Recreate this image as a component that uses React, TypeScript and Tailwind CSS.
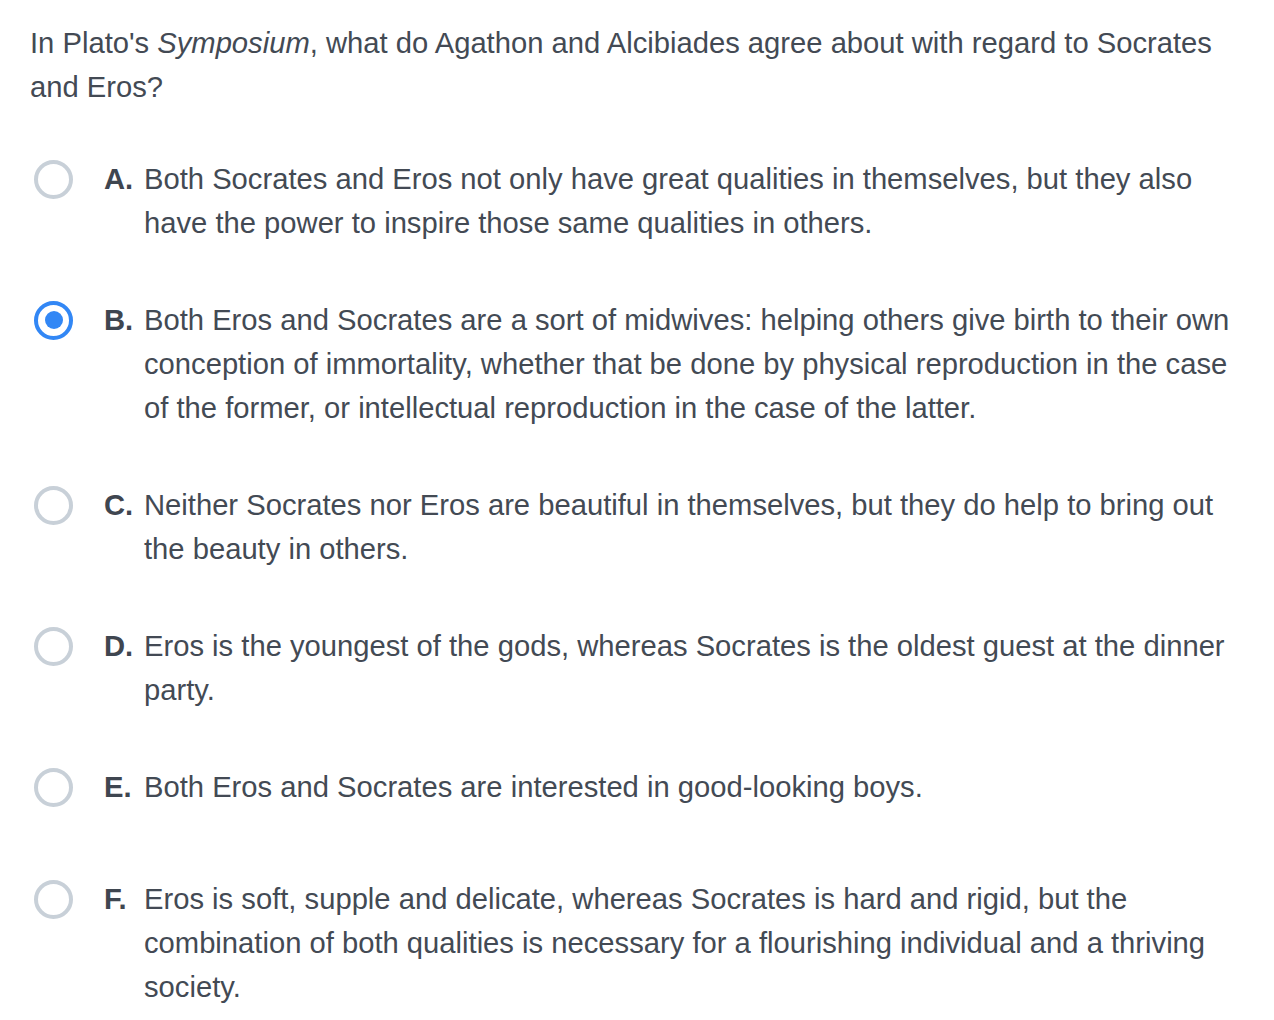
import React from "react";

const options = [
  { l: "A.", t: "Both Socrates and Eros not only have great qualities in themselves, but they also have the power to inspire those same qualities in others." },
  { l: "B.", t: "Both Eros and Socrates are a sort of midwives: helping others give birth to their own conception of immortality, whether that be done by physical reproduction in the case of the former, or intellectual reproduction in the case of the latter.", sel: true },
  { l: "C.", t: "Neither Socrates nor Eros are beautiful in themselves, but they do help to bring out the beauty in others." },
  { l: "D.", t: "Eros is the youngest of the gods, whereas Socrates is the oldest guest at the dinner party." },
  { l: "E.", t: "Both Eros and Socrates are interested in good-looking boys." },
  { l: "F.", t: "Eros is soft, supple and delicate, whereas Socrates is hard and rigid, but the combination of both qualities is necessary for a flourishing individual and a thriving society." },
];

export default function App() {
  return (
    <div
      className="w-[1274px] h-[1020px] bg-white text-[#434a54] overflow-hidden"
      style={{ fontFamily: '"Liberation Sans", Arial, sans-serif' }}
    >
      <div className="pl-[30px] pr-[30px] pt-[21px] text-[29.2px] leading-[44px]">
        <p>
          In Plato's <i>Symposium</i>, what do Agathon and Alcibiades agree about with regard to Socrates and Eros?
        </p>
        <div className="mt-[48px] flex flex-col gap-[53px]">
          {options.map((o) => (
            <div key={o.l} className="flex items-start min-h-[59px]">
              <div className="w-[74px] h-[44px] flex items-center pl-[4px] shrink-0">
                {o.sel ? (
                  <div className="w-[39px] h-[39px] rounded-full border-[4px] border-[#3287f5] flex items-center justify-center">
                    <div className="w-[18px] h-[18px] rounded-full bg-[#3287f5]" />
                  </div>
                ) : (
                  <div className="w-[39px] h-[39px] rounded-full border-[4px] border-[#c8d0d8]" />
                )}
              </div>
              <div className="w-[40px] shrink-0 font-bold text-[#3f4650]">{o.l}</div>
              <div className="flex-1">{o.t}</div>
            </div>
          ))}
        </div>
      </div>
    </div>
  );
}
